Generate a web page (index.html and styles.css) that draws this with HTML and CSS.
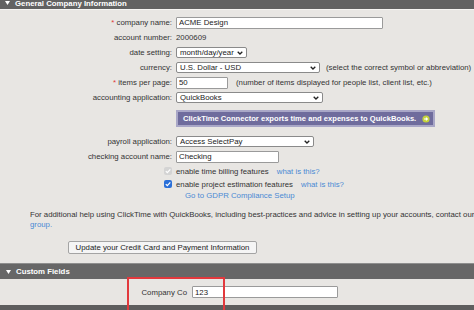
FILE: index.html
```html
<!DOCTYPE html>
<html lang="en">
  <head>
    <meta charset="UTF-8" />
    <meta name="viewport" content="width=device-width, initial-scale=1.0" />
    <title>Company Preferences</title>
    <link rel="stylesheet" href="styles.css">
  </head>
  <body>
    <div class="page">
      <div class="section-bar top-bar">
        <svg class="arrow-down" width="5" height="4" viewBox="0 0 5 4"><path d="M0 0H5L2.5 4Z" fill="#fff"/></svg>
        General Company Information
      </div>

      <div class="settings">
        <div class="row">
          <div class="label"><span class="req">*</span> company name:</div>
          <input class="text w-name" type="text" value="ACME Design" />
        </div>
        <div class="row">
          <div class="label">account number:</div>
          <div class="value">2000609</div>
        </div>
        <div class="row">
          <div class="label">date setting:</div>
          <div class="select w-date">
            <span>month/day/year</span>
            <svg class="chev" width="6" height="4" viewBox="0 0 6 4"><path d="M0.7 0.7L3 3L5.3 0.7" fill="none" stroke="#222" stroke-width="1.3"/></svg>
          </div>
        </div>
        <div class="row">
          <div class="label">currency:</div>
          <div class="select w-currency">
            <span>U.S. Dollar - USD</span>
            <svg class="chev" width="6" height="4" viewBox="0 0 6 4"><path d="M0.7 0.7L3 3L5.3 0.7" fill="none" stroke="#222" stroke-width="1.3"/></svg>
          </div>
          <span class="note note-currency">(select the correct symbol or abbreviation)</span>
        </div>
        <div class="row">
          <div class="label"><span class="req">*</span> items per page:</div>
          <input class="text w-items" type="text" value="50" />
          <span class="note note-items">(number of items displayed for people list, client list, etc.)</span>
        </div>
        <div class="row">
          <div class="label">accounting application:</div>
          <div class="select w-accounting">
            <span>QuickBooks</span>
            <svg class="chev" width="6" height="4" viewBox="0 0 6 4"><path d="M0.7 0.7L3 3L5.3 0.7" fill="none" stroke="#222" stroke-width="1.3"/></svg>
          </div>
        </div>
        <div class="row connector-row">
          <div class="label"></div>
          <button class="connector" type="button">
            <span>ClickTime Connector exports time and expenses to QuickBooks.</span>
            <svg class="go" width="8" height="8" viewBox="0 0 8 8"><circle cx="4" cy="4" r="3.6" fill="#c4d23c"/><path d="M2 4H5.2M3.9 2.6L5.4 4L3.9 5.4" fill="none" stroke="#fff" stroke-width="1.1"/></svg>
          </button>
        </div>
        <div class="row">
          <div class="label">payroll application:</div>
          <div class="select w-payroll">
            <span>Access SelectPay</span>
            <svg class="chev" width="6" height="4" viewBox="0 0 6 4"><path d="M0.7 0.7L3 3L5.3 0.7" fill="none" stroke="#222" stroke-width="1.3"/></svg>
          </div>
        </div>
        <div class="row">
          <div class="label">checking account name:</div>
          <input class="text w-checking" type="text" value="Checking" />
        </div>
        <div class="row check-row first-check">
          <div class="label">
            <span class="check disabled"><svg width="8" height="8" viewBox="0 0 8 8"><path d="M1.8 4.2L3.3 5.7L6.3 2.4" fill="none" stroke="#fff" stroke-width="1.2"/></svg></span>
          </div>
          <span>enable time billing features</span>
          <a class="link what-1" href="#">what is this?</a>
        </div>
        <div class="row check-row second-check">
          <div class="label">
            <span class="check"><svg width="8" height="8" viewBox="0 0 8 8"><path d="M1.8 4.2L3.3 5.7L6.3 2.4" fill="none" stroke="#fff" stroke-width="1.2"/></svg></span>
          </div>
          <span>enable project estimation features</span>
          <a class="link what-2" href="#">what is this?</a>
        </div>
        <div class="row gdpr-row">
          <div class="label"></div>
          <a class="link gdpr" href="#">Go to GDPR Compliance Setup</a>
        </div>
      </div>

      <p class="help">
        <span class="help-line">For additional help using ClickTime with QuickBooks, including best-practices and advice in setting up your accounts, contact our</span><br>
        <a class="link" href="#">group.</a>
      </p>

      <button class="update" type="button">Update your Credit Card and Payment Information</button>

      <div class="section-bar custom-bar">
        <svg class="arrow-down" width="5" height="4" viewBox="0 0 5 4"><path d="M0 0H5L2.5 4Z" fill="#fff"/></svg>
        Custom Fields
      </div>
      <div class="custom-row">
        <div class="custom-label">Company Co</div>
        <input class="text w-custom" type="text" value="123" />
      </div>
      <div class="bottom-bar"></div>

      <div class="highlight"></div>
    </div>
  </body>
</html>
```

FILE: styles.css
```css
html, body {
  margin: 0;
  overflow: hidden;
}
body {
  background-color: #e8e6e3;
  font-family: "Liberation Sans", Arial, sans-serif;
  font-size: 7.8px;
  color: #333;
}
.page {
  position: relative;
  width: 474px;
  height: 310px;
}
.section-bar {
  display: flex;
  align-items: center;
  gap: 5px;
  box-sizing: border-box;
  padding-left: 5px;
  background-color: #626262;
  color: #fff;
  font-weight: bold;
}
.top-bar {
  height: 10px;
  padding-bottom: 3px;
  border-bottom: 1px solid #f5f4f2;
}
.custom-bar {
  height: 16px;
  padding-left: 6px;
  border-top: 1px solid #8e8e8e;
  background-color: #676767;
}
.settings {
  padding-top: 5px;
}
.row {
  display: flex;
  align-items: center;
  gap: 4px;
  height: 15px;
}
.label {
  flex: none;
  width: 172px;
  display: flex;
  justify-content: flex-end;
  white-space: pre;
}
.req {
  color: #e03a3a;
}
.text {
  box-sizing: border-box;
  height: 12px;
  margin: 0;
  padding: 0 2px;
  border: 1px solid #9a9a9a;
  border-radius: 1px;
  background-color: #fff;
  font-family: inherit;
  font-size: 7.8px;
  color: #222;
  outline: none;
}
.select {
  box-sizing: border-box;
  display: flex;
  align-items: center;
  justify-content: space-between;
  height: 11px;
  padding: 0 3px 0 3px;
  border: 1px solid #8a8a8a;
  border-radius: 2px;
  background-color: #fff;
  color: #222;
}
.chev {
  flex: none;
}
.w-name { width: 207px; }
.w-date { width: 71px; }
.w-currency { width: 144px; }
.w-items { width: 52px; }
.w-accounting { width: 147px; }
.w-payroll { width: 138px; }
.w-checking { width: 103px; }
.w-custom { width: 146px; height: 12px; }
.note-currency {
  margin-left: 2px;
}
.note-items {
  margin-left: 4px;
}
.connector-row {
  height: 17px;
  margin: 5px 0 7px;
}
.connector {
  display: flex;
  align-items: center;
  justify-content: flex-start;
  gap: 6px;
  box-sizing: border-box;
  width: 259px;
  height: 17px;
  margin: 0;
  padding: 0 0 0 5px;
  border: 2px solid #a9a7c7;
  background-color: #6f6c9d;
  color: #fff;
  font-family: inherit;
  font-size: 7.6px;
  font-weight: bold;
  white-space: nowrap;
}
.check-row {
  color: #333;
}
.first-check {
  height: 14px;
}
.second-check {
  height: 12px;
}
.gdpr-row {
  height: 10px;
}
.check {
  display: flex;
  align-items: center;
  justify-content: center;
  width: 8px;
  height: 8px;
  border-radius: 2px;
  background-color: #2a6fd8;
}
.check.disabled {
  background-color: #d4d4d4;
}
.link {
  color: #4a8ad4;
  text-decoration: none;
}
.what-1,
.what-2 {
  margin-left: 4px;
}
.gdpr {
  margin-left: 9px;
}
.help {
  margin: 10px 0 0 30px;
  line-height: 9.5px;
}
.help-line {
  white-space: nowrap;
}
.update {
  display: block;
  box-sizing: border-box;
  width: 189px;
  height: 13px;
  margin: 12px 0 9px 68px;
  padding: 0;
  border: 1px solid #a4a4a4;
  border-radius: 2px;
  background-color: #f5f5f5;
  font-family: inherit;
  font-size: 7.8px;
  color: #222;
}
.custom-row {
  display: flex;
  align-items: center;
  gap: 5px;
  height: 26px;
}
.custom-label {
  width: 187px;
  text-align: right;
}
.bottom-bar {
  height: 6px;
  background-color: #5e5e5e;
}
.highlight {
  position: absolute;
  left: 127px;
  top: 277px;
  width: 94px;
  height: 40px;
  border: 2px solid #e2393d;
}
```
